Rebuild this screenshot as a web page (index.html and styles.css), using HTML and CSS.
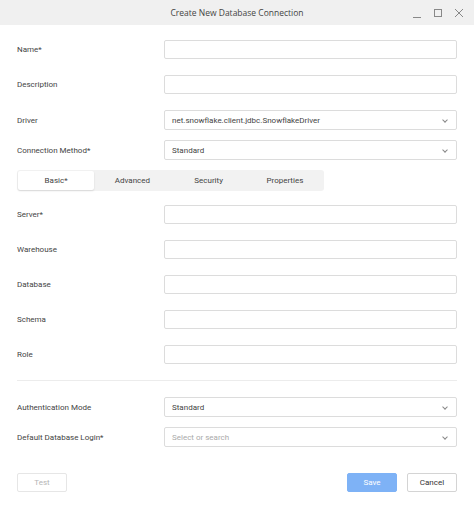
FILE: index.html
```html
<!DOCTYPE html>
<html lang="en">
<head>
    <meta charset="UTF-8">
    <title>Create New Database Connection</title>
    <link rel="stylesheet" href="styles.css">
</head>
<body>
    <div class="window">
        <div class="titlebar">
            <span class="title">Create New Database Connection</span>
            <div class="controls">
                <svg width="10" height="10" viewBox="0 0 10 10"><path d="M1 9.5h8" stroke="#888" fill="none"/></svg>
                <svg width="10" height="10" viewBox="0 0 10 10"><rect x="1.5" y="1.5" width="7" height="7" stroke="#888" fill="none"/></svg>
                <svg width="10" height="10" viewBox="0 0 10 10"><path d="M1 1l8 8M9 1l-8 8" stroke="#888" fill="none"/></svg>
            </div>
        </div>

        <div class="content">
            <div class="form-row">
                <label>Name*</label>
                <div class="input"></div>
            </div>
            <div class="form-row">
                <label>Description</label>
                <div class="input"></div>
            </div>
            <div class="form-row select-row">
                <label>Driver</label>
                <div class="input select">net.snowflake.client.jdbc.SnowflakeDriver</div>
            </div>
            <div class="form-row select-row">
                <label>Connection Method*</label>
                <div class="input select">Standard</div>
            </div>

            <div class="tabs">
                <button class="tab active">Basic*</button>
                <button class="tab">Advanced</button>
                <button class="tab">Security</button>
                <button class="tab">Properties</button>
            </div>

            <div class="tab-panel">
                <div class="form-row">
                    <label>Server*</label>
                    <div class="input"></div>
                </div>
                <div class="form-row">
                    <label>Warehouse</label>
                    <div class="input"></div>
                </div>
                <div class="form-row">
                    <label>Database</label>
                    <div class="input"></div>
                </div>
                <div class="form-row">
                    <label>Schema</label>
                    <div class="input"></div>
                </div>
                <div class="form-row">
                    <label>Role</label>
                    <div class="input"></div>
                </div>
            </div>

            <hr class="divider">

            <div class="form-row select-row">
                <label>Authentication Mode</label>
                <div class="input select">Standard</div>
            </div>
            <div class="form-row select-row">
                <label>Default Database Login*</label>
                <div class="input select placeholder">Select or search</div>
            </div>

            <div class="footer">
                <button class="btn btn-disabled">Test</button>
                <div class="footer-right">
                    <button class="btn btn-primary">Save</button>
                    <button class="btn">Cancel</button>
                </div>
            </div>
        </div>
    </div>
</body>
</html>
```

FILE: styles.css
```css
* {
    margin: 0;
    padding: 0;
    box-sizing: border-box;
    font-family: Roboto, 'Liberation Sans', sans-serif;
}

body {
    background-color: #fff;
    color: #444;
    width: 474px;
    height: 509px;
    overflow: hidden;
}

.titlebar {
    height: 25px;
    background-color: #f0f0f0;
    display: flex;
    align-items: center;
    justify-content: center;
    position: relative;
}

.title {
    font-family: 'Open Sans', sans-serif;
    font-size: 8.5px;
    color: #444;
}

.controls {
    position: absolute;
    right: 10px;
    top: 8px;
    display: flex;
    gap: 11px;
}

.content {
    padding: 15px 17px 0;
}

.form-row {
    display: flex;
    align-items: center;
    height: 19px;
    margin-bottom: 16px;
}

.form-row.select-row {
    height: 20px;
    margin-bottom: 10px;
}

.form-row label {
    width: 147px;
    font-size: 8px;
    color: #444;
}

.input {
    flex: 1;
    height: 100%;
    border: 1px solid #dcdcdc;
    border-radius: 2px;
    font-size: 8px;
    color: #444;
    padding: 0 7px;
    display: flex;
    align-items: center;
}

.select {
    position: relative;
}

.select::after {
    content: '';
    position: absolute;
    right: 9px;
    top: 7px;
    width: 3px;
    height: 3px;
    border-right: 1px solid #888;
    border-bottom: 1px solid #888;
    transform: rotate(45deg);
}

.placeholder {
    color: #aaa;
}

.tabs {
    display: flex;
    width: 307px;
    height: 21px;
    padding: 1px;
    background-color: #f2f2f2;
    border-radius: 3px;
    margin-bottom: 14px;
}

.tab {
    flex: 1;
    border: none;
    background: none;
    font-size: 8px;
    color: #444;
    border-radius: 2px;
}

.tab.active {
    background-color: #fff;
    box-shadow: 0 1px 2px rgba(0,0,0,0.12);
}

.tab-panel .form-row:last-child {
    margin-bottom: 16px;
}

.divider {
    border: none;
    border-top: 1px solid #ececec;
    margin-bottom: 16px;
}

.footer {
    display: flex;
    justify-content: space-between;
    margin-top: 26px;
}

.footer-right {
    display: flex;
    gap: 10px;
}

.btn {
    width: 50px;
    height: 19px;
    font-size: 8px;
    background-color: #fff;
    border: 1px solid #d4d4d4;
    border-radius: 2px;
    color: #333;
}

.btn-disabled {
    border-color: #e6e6e6;
    color: #b5b5b5;
}

.btn-primary {
    background-color: #7eb2f6;
    border-color: #7eb2f6;
    color: #fff;
}
```
